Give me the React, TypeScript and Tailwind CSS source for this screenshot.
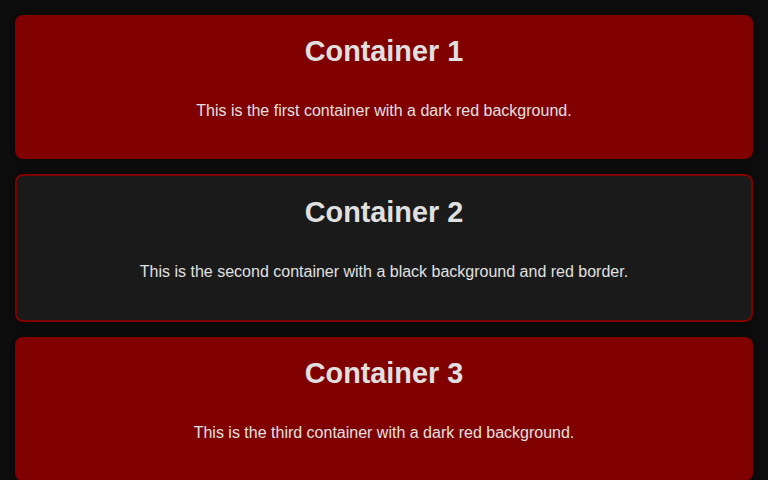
import React from "react";

const containers = [
  { title: "Container 1", text: "This is the first container with a dark red background.", dark: false },
  { title: "Container 2", text: "This is the second container with a black background and red border.", dark: true },
  { title: "Container 3", text: "This is the third container with a dark red background.", dark: false },
];

export default function App() {
  return (
    <div className="min-h-screen bg-[#0d0d0d] p-[15px] flex flex-col gap-[15px] font-['Liberation_Sans',Arial,sans-serif] text-[#e0e0e0]">
      {containers.map((c) => (
        <div
          key={c.title}
          className={
            c.dark
              ? "rounded-lg bg-[#1a1a1a] border-2 border-[#800000] pt-[20px] pb-[39px] text-center shadow-[0_0_10px_rgba(0,0,0,0.6)]"
              : "rounded-lg bg-[#800000] pt-[20px] pb-[39px] text-center shadow-[0_0_10px_rgba(0,0,0,0.6)]"
          }
        >
          <h1 className="text-[28.8px] leading-[33px] font-bold">{c.title}</h1>
          <p className="mt-[34px] text-[16px] leading-[18px]">{c.text}</p>
        </div>
      ))}
    </div>
  );
}
